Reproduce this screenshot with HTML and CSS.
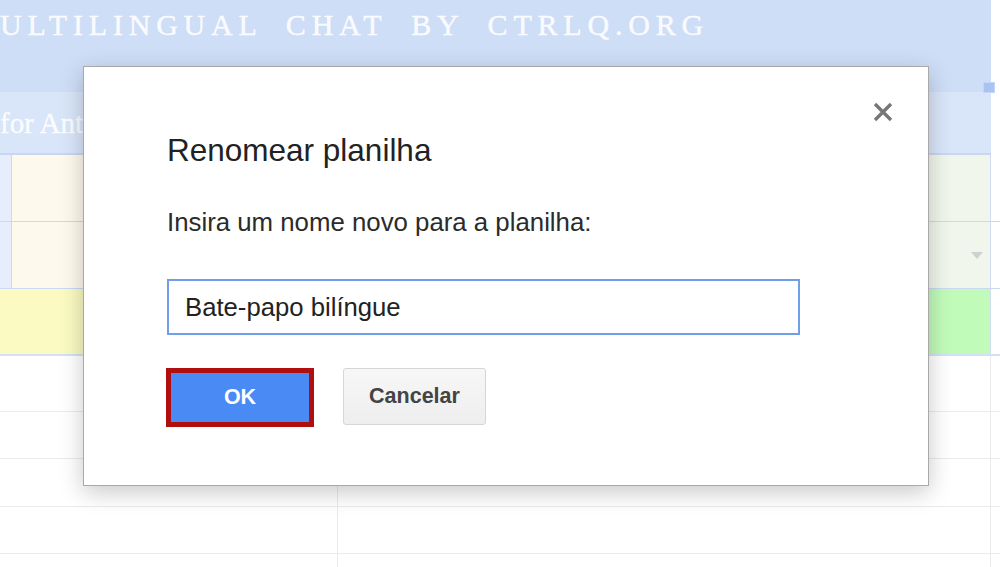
FILE: index.html
```html
<!DOCTYPE html>
<html lang="pt-BR">

<head>
  <meta charset="utf-8">
  <title>Renomear planilha</title>
  <link rel="stylesheet" href="styles.css">
</head>

<body>
  <!-- planilha ao fundo -->
  <div class="sheet">
    <header class="banner">
      <h1 class="banner-title">ULTILINGUAL CHAT BY CTRLQ.ORG</h1>
      <span class="handle"></span>
    </header>
    <div class="subtitle">for Ant</div>
    <div class="row row-cream">
      <div class="cell head"></div>
      <div class="cell col-a"></div>
      <div class="cell col-b"></div>
      <div class="cell rest"></div>
    </div>
    <div class="row row-cream">
      <div class="cell head"></div>
      <div class="cell col-a"></div>
      <div class="cell col-b"><i class="caret"></i></div>
      <div class="cell rest"></div>
    </div>
    <div class="row row-yellow">
      <div class="cell head"></div>
      <div class="cell col-a"></div>
      <div class="cell col-b"></div>
      <div class="cell rest"></div>
    </div>
    <div class="row row-white r56">
      <div class="cell head"></div>
      <div class="cell col-a"></div>
      <div class="cell col-b"></div>
      <div class="cell rest"></div>
    </div>
    <div class="row row-white">
      <div class="cell head"></div>
      <div class="cell col-a"></div>
      <div class="cell col-b"></div>
      <div class="cell rest"></div>
    </div>
    <div class="row row-white r48">
      <div class="cell head"></div>
      <div class="cell col-a"></div>
      <div class="cell col-b"></div>
      <div class="cell rest"></div>
    </div>
    <div class="row row-white">
      <div class="cell head"></div>
      <div class="cell col-a"></div>
      <div class="cell col-b"></div>
      <div class="cell rest"></div>
    </div>
    <div class="row row-white row-last">
      <div class="cell head"></div>
      <div class="cell col-a"></div>
      <div class="cell col-b"></div>
      <div class="cell rest"></div>
    </div>
  </div>

  <!-- caixa de diálogo -->
  <div class="dialog">
    <button class="dialog-close" aria-label="Fechar">
      <svg width="24" height="24" viewBox="0 0 24 24">
        <path d="M4 4 L20 20 M20 4 L4 20" stroke="#777" stroke-width="3.4" fill="none"/>
      </svg>
    </button>
    <h2 class="dialog-title">Renomear planilha</h2>
    <p class="dialog-label">Insira um nome novo para a planilha:</p>
    <input class="dialog-input" type="text" value="Bate-papo bilíngue">
    <div class="dialog-buttons">
      <button class="btn btn-ok">OK</button>
      <button class="btn btn-cancel">Cancelar</button>
    </div>
  </div>
</body>

</html>
```

FILE: styles.css
```css
* {
  padding: 0;
  margin: 0;
  box-sizing: border-box;
}

body {
  width: 1000px;
  height: 567px;
  overflow: hidden;
  position: relative;
  background-color: #fff;
  font-family: "Liberation Sans", Arial, sans-serif;
}

/* 顶部横幅 */
.banner {
  width: 991px;
  height: 92px;
  position: relative;
  background-color: #cfdef7;
}

.banner-title {
  padding-top: 10px;
  font-family: "Liberation Serif", serif;
  font-weight: normal;
  font-size: 30px;
  line-height: 1;
  letter-spacing: 5.8px;
  word-spacing: 11px;
  white-space: nowrap;
  color: rgba(255, 255, 255, .9);
  -webkit-text-stroke: .4px rgba(255, 255, 255, .9);
}

.handle {
  position: absolute;
  right: -4px;
  bottom: -1px;
  width: 12px;
  height: 11px;
  background-color: #aac4f1;
  border: 1px solid #c4d6f6;
}

.subtitle {
  width: 991px;
  height: 63px;
  padding-top: 15px;
  background-color: #d9e5f9;
  border-bottom: 2px solid #c8d7f1;
  font-family: "Liberation Serif", serif;
  font-size: 29px;
  line-height: 32px;
  color: rgba(255, 255, 255, .92);
  -webkit-text-stroke: .3px rgba(255, 255, 255, .9);
}

/* 表格行 */
.row {
  display: grid;
  grid-template-columns: 12px 326px 653px 1fr;
  height: 47px;
}

.cell {
  height: 100%;
}

.row-cream {
  height: 67px;
  border-bottom: 1px solid #c9d8f3;
}

.row-cream:first-of-type {
  height: 66px;
}

.row-cream .head {
  background-color: #e6eefb;
  border-right: 1px solid #c9d8f3;
}

.row-cream .col-a {
  background-color: #fdf9ec;
}

.row-cream .col-b {
  background-color: #f1f6ec;
  border-right: 1px solid #d0ddf4;
  display: flex;
  justify-content: flex-end;
  align-items: center;
  padding-right: 7px;
}

.row-yellow {
  height: 67px;
  border-bottom: 2px solid #d3e0f5;
}

.row-yellow .head,
.row-yellow .col-a {
  background-color: #fafac2;
}

.row-yellow .col-b {
  background-color: #c1fbb9;
  border-right: 1px solid #d0ddf4;
}

.row-white {
  border-bottom: 1px solid #ebebeb;
}

.row-white .col-a {
  border-right: 1px solid #ebebeb;
}

.row-white .col-b {
  border-right: 1px solid #ebebeb;
}

.r56 {
  height: 56px;
}

.r48 {
  height: 48px;
}

.row-last {
  height: 14px;
  border-bottom: 0;
}

.caret {
  width: 0;
  height: 0;
  border-left: 6px solid transparent;
  border-right: 6px solid transparent;
  border-top: 7px solid #d0d0d0;
}

/* 对话框 */
.dialog {
  position: absolute;
  left: 83px;
  top: 66px;
  width: 846px;
  height: 420px;
  padding: 65px 83px 0;
  background-color: #fff;
  border: 1px solid #a9a9a9;
  box-shadow: 0 6px 22px rgba(0, 0, 0, .22);
}

.dialog-close {
  position: absolute;
  top: 33px;
  right: 33px;
  width: 24px;
  height: 24px;
  border: 0;
  background: none;
  display: flex;
}

.dialog-title {
  font-size: 31.5px;
  line-height: 36px;
  font-weight: normal;
  color: #222;
}

.dialog-label {
  margin-top: 39px;
  font-size: 25.8px;
  line-height: 30px;
  color: #2b2b2b;
}

.dialog-input {
  display: block;
  margin-top: 42px;
  width: 633px;
  height: 56px;
  padding: 0 16px;
  border: 2px solid #6f9feb;
  outline: none;
  font-family: "Liberation Sans", Arial, sans-serif;
  font-size: 25.7px;
  color: #222;
}

.dialog-buttons {
  display: flex;
  align-items: flex-start;
  gap: 29px;
  margin-top: 33px;
}

.btn {
  height: 57px;
  font-family: "Liberation Sans", Arial, sans-serif;
  font-weight: 700;
  font-size: 21.5px;
  cursor: pointer;
}

.btn-ok {
  margin-left: -1px;
  width: 148px;
  height: 59px;
  border: 5px solid #b00f0f;
  background-color: #4a8af4;
  color: #fff;
}

.btn-cancel {
  width: 143px;
  border: 1px solid #d6d6d6;
  border-radius: 3px;
  background: linear-gradient(#f7f7f7, #eeeeee);
  color: #444;
}
```
